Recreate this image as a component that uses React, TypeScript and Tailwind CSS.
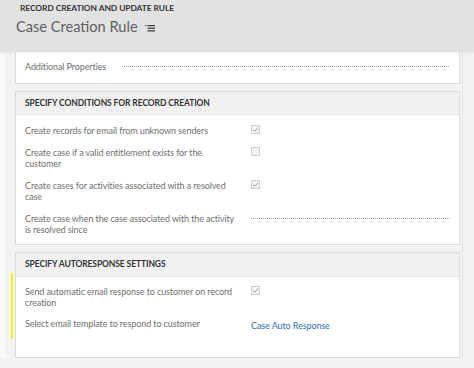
import React from 'react';

const Check = ({ checked }: { checked: boolean }) => (
  <span className="flex h-[9px] w-[9px] items-center justify-center border border-[#cfcfcf] bg-[#f3f3f3]">
    {checked && (
      <svg width="7" height="7" viewBox="0 0 7 7">
        <path d="M1 3.6 L2.8 5.3 L6 1.5" fill="none" stroke="#a0a0a0" strokeWidth="1" />
      </svg>
    )}
  </span>
);

const Row = ({ label, children }: { label: React.ReactNode; children?: React.ReactNode }) => (
  <div className="flex items-start leading-[11px]">
    <div className="w-[226px] shrink-0 whitespace-nowrap text-[#707070]">{label}</div>
    <div className="flex-1">{children}</div>
  </div>
);

const Dotted = () => <div className="mt-[5px] border-t border-dotted border-[#a0a0a0]" />;

const App = () => {
  return (
    <div
      className="h-[368px] w-[474px] overflow-hidden bg-[#f3f3f3] text-[9px] tracking-[-0.1px]"
      style={{ fontFamily: 'Lato, "Noto Sans", sans-serif' }}
    >
      {/* header */}
      <div className="relative z-10 h-[52px] bg-[#e2e2e2] pl-[20px] pt-[2px] shadow-[0_1px_2px_rgba(0,0,0,0.06)]">
        <div className="text-[8.4px] font-bold leading-[12px] tracking-[-0.05px] text-[#333]">RECORD CREATION AND UPDATE RULE</div>
        <div className="mt-[4px] -ml-[4px] flex items-center gap-[7px]">
          <span className="text-[14.6px] leading-[18px] tracking-[0px] text-[#5e5e5e]">Case Creation Rule</span>
          <svg width="10" height="8" viewBox="0 0 10 8" className="mt-[2px]">
            <rect x="0" y="1" width="1.5" height="1" fill="#444" />
            <rect x="2.5" y="1" width="7.5" height="1.3" fill="#444" />
            <rect x="2.5" y="3.6" width="7.5" height="1.3" fill="#444" />
            <rect x="2.5" y="6.2" width="7.5" height="1.3" fill="#444" />
          </svg>
        </div>
      </div>

      <div className="flex">
        <div className="w-[5px] shrink-0 bg-[#fafafa]" />
        <div className="flex w-[455px] flex-col gap-[7px] pl-[10px]">
          {/* card 1 */}
          <div className="-mt-[4px] border border-[#dcdcdc] bg-white px-[9px] pb-[11px] pt-[12px]">
            <div className="flex items-center leading-[11px]">
              <span className="w-[97px] shrink-0 text-[#707070]">Additional Properties</span>
              <div className="mr-[1px] flex-1 border-t border-dotted border-[#a0a0a0]" />
            </div>
          </div>

          {/* card 2 */}
          <div className="border border-[#dcdcdc] bg-white">
            <div className="flex h-[23px] items-center border-b border-[#e4e4e4] bg-[#f1f1f1] px-[9px] text-[8.5px] font-bold text-[#333]">
              SPECIFY CONDITIONS FOR RECORD CREATION
            </div>
            <div className="flex flex-col gap-[11px] px-[9px] pb-[9px] pt-[10px]">
              <Row label="Create records for email from unknown senders">
                <Check checked />
              </Row>
              <Row label={<>Create case if a valid entitlement exists for the<br />customer</>}>
                <Check checked={false} />
              </Row>
              <Row label={<>Create cases for activities associated with a resolved<br />case</>}>
                <Check checked />
              </Row>
              <Row label={<>Create case when the case associated with the activity<br />is resolved since</>}>
                <Dotted />
              </Row>
            </div>
          </div>

          {/* card 3 */}
          <div className="relative border border-[#dcdcdc] bg-white">
            <div className="absolute -left-[5px] top-[20px] h-[66px] w-[2px] bg-[#f5f500]" />
            <div className="flex h-[24px] items-center border-b border-[#e4e4e4] bg-[#f1f1f1] px-[9px] text-[8.5px] font-bold text-[#333]">
              SPECIFY AUTORESPONSE SETTINGS
            </div>
            <div className="flex flex-col gap-[10px] px-[9px] pb-[26px] pt-[9px]">
              <Row label={<>Send automatic email response to customer on record<br />creation</>}>
                <Check checked />
              </Row>
              <Row label="Select email template to respond to customer">
                <span className="mt-[2px] block text-[#2f6fb5]">Case Auto Response</span>
              </Row>
            </div>
          </div>
        </div>
        <div className="ml-[2px] w-[1px] bg-[#e2e2e2]" />
      </div>
    </div>
  );
};

export default App;
